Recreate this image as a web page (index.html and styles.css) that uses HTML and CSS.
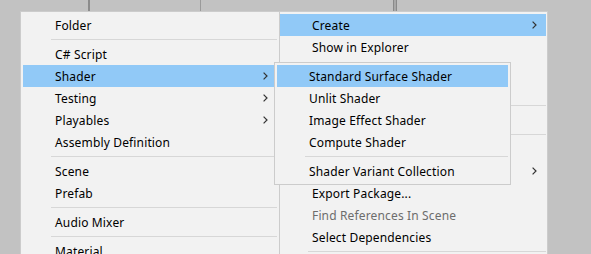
FILE: index.html
```html
<!DOCTYPE html>
<html>
<head>
<meta charset="utf-8">
<link rel="stylesheet" href="styles.css">
</head>
<body>
<div class="stage">
  <div class="tick tick-a"></div>
  <div class="tick tick-b"></div>
  <div class="tick tick-c"></div>

  <div class="menu menu-main">
    <div class="item"><span class="label">Folder</span></div>
    <div class="sep"></div>
    <div class="item"><span class="label">C# Script</span></div>
    <div class="item active"><span class="label">Shader</span><svg class="arrow" width="5" height="8" viewBox="0 0 5 8"><path d="M0.6 0.6 L4 4 L0.6 7.4" fill="none" stroke="#333" stroke-width="1.2"/></svg></div>
    <div class="item"><span class="label">Testing</span><svg class="arrow" width="5" height="8" viewBox="0 0 5 8"><path d="M0.6 0.6 L4 4 L0.6 7.4" fill="none" stroke="#333" stroke-width="1.2"/></svg></div>
    <div class="item"><span class="label">Playables</span><svg class="arrow" width="5" height="8" viewBox="0 0 5 8"><path d="M0.6 0.6 L4 4 L0.6 7.4" fill="none" stroke="#333" stroke-width="1.2"/></svg></div>
    <div class="item"><span class="label">Assembly Definition</span></div>
    <div class="sep"></div>
    <div class="item"><span class="label">Scene</span></div>
    <div class="item"><span class="label">Prefab</span></div>
    <div class="sep"></div>
    <div class="item"><span class="label">Audio Mixer</span></div>
    <div class="sep"></div>
    <div class="item"><span class="label">Material</span></div>
  </div>

  <div class="menu menu-assets">
    <div class="item active"><span class="label">Create</span><svg class="arrow" width="5" height="8" viewBox="0 0 5 8"><path d="M0.6 0.6 L4 4 L0.6 7.4" fill="none" stroke="#333" stroke-width="1.2"/></svg></div>
    <div class="item"><span class="label">Show in Explorer</span></div>
    <div class="item"></div>
    <div class="item"></div>
    <div class="sep"></div>
    <div class="item"></div>
    <div class="sep"></div>
    <div class="item"></div>
    <div class="item"><span class="label"></span><svg class="arrow" width="5" height="8" viewBox="0 0 5 8"><path d="M0.6 0.6 L4 4 L0.6 7.4" fill="none" stroke="#333" stroke-width="1.2"/></svg></div>
    <div class="item"><span class="label">Export Package...</span></div>
    <div class="item disabled"><span class="label">Find References In Scene</span></div>
    <div class="item"><span class="label">Select Dependencies</span></div>
    <div class="sep"></div>
    <div class="item"></div>
  </div>

  <div class="menu menu-shader">
    <div class="item active"><span class="label">Standard Surface Shader</span></div>
    <div class="item"><span class="label">Unlit Shader</span></div>
    <div class="item"><span class="label">Image Effect Shader</span></div>
    <div class="item"><span class="label">Compute Shader</span></div>
    <div class="sep"></div>
    <div class="item"><span class="label">Shader Variant Collection</span></div>
  </div>
</div>
</body>
</html>
```

FILE: styles.css
```css
html, body {
  margin: 0;
  padding: 0;
  background: #c2c2c2;
}

.stage {
  position: relative;
  width: 591px;
  height: 254px;
  overflow: hidden;
  background: #c2c2c2;
  font-family: "Noto Sans", "Open Sans", sans-serif;
  font-size: 12px;
  letter-spacing: 0.15px;
  color: #000;
}

.tick {
  position: absolute;
  top: 0;
  height: 11px;
  box-sizing: border-box;
}

.tick-a {
  left: 88px;
  width: 2px;
  background: #8c8c8c;
}

.tick-b {
  left: 200px;
  width: 1px;
  background: #9a9a9a;
}

.tick-c {
  left: 393px;
  width: 4px;
  background: #a8a8a8;
  border-left: 1px solid #8a8a8a;
  border-right: 1px solid #8a8a8a;
}

.menu {
  position: absolute;
  box-sizing: border-box;
  background: #f2f2f2;
  border: 1px solid #cccccc;
  display: flex;
  flex-direction: column;
}

.menu-main {
  left: 20px;
  top: 11px;
  width: 260px;
  padding: 2px;
}

.menu-assets {
  left: 279px;
  top: 11px;
  width: 269px;
  padding: 2px 1px 2px 0;
}

.menu-shader {
  left: 274px;
  top: 62px;
  width: 237px;
  padding: 2px;
}

.item {
  height: 22px;
  flex: none;
  display: flex;
  align-items: center;
  padding-left: 32px;
  padding-right: 9px;
  white-space: nowrap;
}

.item .label {
  flex: 1;
}

.item.active {
  background: #91c9f7;
}

.item.disabled {
  color: #6d6d6d;
}

.arrow {
  display: block;
  flex: none;
}

.sep {
  height: 1px;
  flex: none;
  margin: 3px 0 3px 28px;
  background: #d7d7d7;
}
```
